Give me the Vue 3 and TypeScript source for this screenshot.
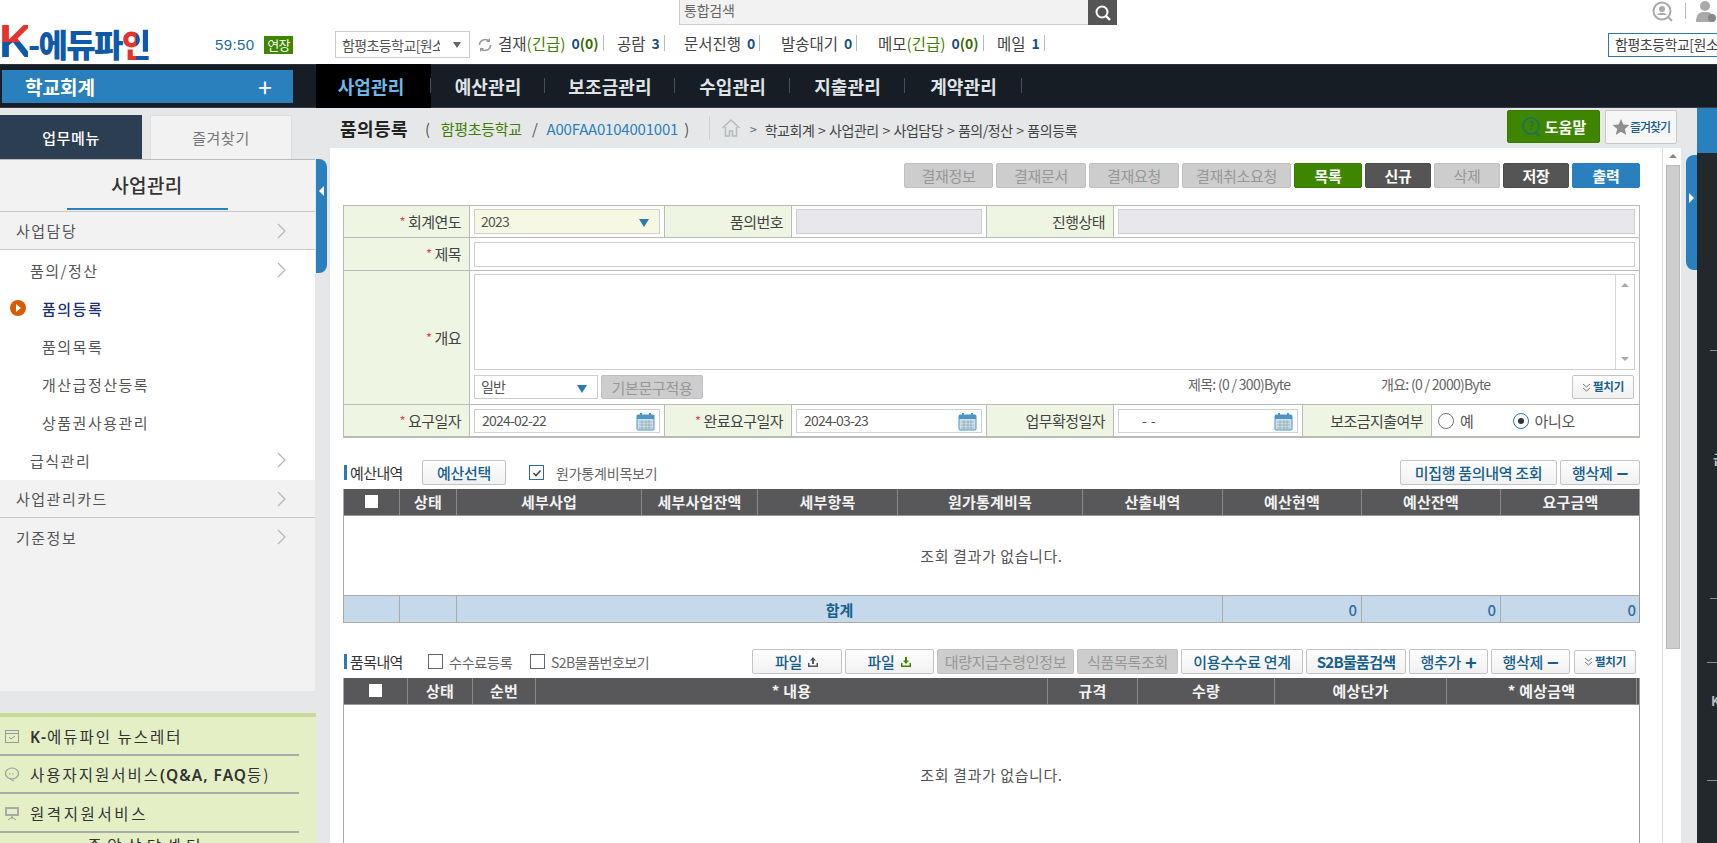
<script setup lang="ts">
const alerts = [
  { label: '결재', urgent: true, val: '0', sub: '0', w: 119 },
  { label: '공람', urgent: false, val: '3', w: 67 },
  { label: '문서진행', urgent: false, val: '0', w: 97 },
  { label: '발송대기', urgent: false, val: '0', w: 97 },
  { label: '메모', urgent: true, val: '0', sub: '0', w: 119 },
  { label: '메일', urgent: false, val: '1', w: 50 },
]
const navItems = [
  { t: '사업관리', w: 115, active: true },
  { t: '예산관리', w: 114 },
  { t: '보조금관리', w: 130 },
  { t: '수입관리', w: 115 },
  { t: '지출관리', w: 115 },
  { t: '계약관리', w: 117 },
]
const topButtons = [
  { t: '결재정보', w: 89, k: 'off' },
  { t: '결재문서', w: 90, k: 'off' },
  { t: '결재요청', w: 90, k: 'off' },
  { t: '결재취소요청', w: 109, k: 'off' },
  { t: '목록', w: 68, k: 'green' },
  { t: '신규', w: 66, k: 'dark' },
  { t: '삭제', w: 66, k: 'off' },
  { t: '저장', w: 66, k: 'dark' },
  { t: '출력', w: 68, k: 'blue' },
]
const budgetCols = [
  { t: '상태', w: 57 }, { t: '세부사업', w: 185 }, { t: '세부사업잔액', w: 116 }, { t: '세부항목', w: 140 },
  { t: '원가통계비목', w: 185 }, { t: '산출내역', w: 140 }, { t: '예산현액', w: 139 }, { t: '예산잔액', w: 139 }, { t: '요구금액', w: 139 },
]
const itemCols = [
  { t: '상태', w: 65 }, { t: '순번', w: 63 }, { t: '* 내용', w: 512 }, { t: '규격', w: 90 },
  { t: '수량', w: 137 }, { t: '예상단가', w: 172 }, { t: '* 예상금액', w: 190 },
]
const itemButtons = [
  { t: '대량지급수령인정보', w: 137, k: 'off' },
  { t: '식품목록조회', w: 101, k: 'off' },
  { t: '이용수수료 연계', w: 122, k: 'line' },
  { t: 'S2B물품검색', w: 100, k: 'line' },
]
const sideRows = [
  { t: '품의/정산', cls: 'sub', arrow: true },
  { t: '품의등록', cls: 'leaf cur', arrow: false },
  { t: '품의목록', cls: 'leaf', arrow: false },
  { t: '개산급정산등록', cls: 'leaf', arrow: false },
  { t: '상품권사용관리', cls: 'leaf', arrow: false },
  { t: '급식관리', cls: 'sub', arrow: true },
]
</script>

<template>
  <div class="page">
    <header class="top">
      <div class="top-row1">
        <div class="search">
          <span class="search-box">통합검색</span>
          <span class="search-btn">
            <svg width="18" height="18" viewBox="0 0 18 18"><circle cx="8" cy="8" r="5.500" fill="none" stroke="#fff" stroke-width="2" /><path d="M12 12l4 4" stroke="#fff" stroke-width="2.400" /></svg>
          </span>
        </div>
        <div class="top-icons">
          <svg width="24" height="24" viewBox="0 0 24 24"><circle cx="11" cy="11" r="8.500" fill="none" stroke="#aaa" stroke-width="2" /><circle cx="11" cy="9" r="3" fill="#aaa" /><path d="M6 15c2-3 8-3 10 0" fill="#aaa" /><path d="M17 17l4 4" stroke="#aaa" stroke-width="2" /></svg>
          <i class="top-sep"></i>
          <svg width="24" height="24" viewBox="0 0 24 24"><circle cx="10" cy="6" r="5" fill="#aaa" /><path d="M1 22c0-9 4-10 9-10s9 1 9 10z" fill="#aaa" /><circle cx="17" cy="18" r="4" fill="#888" /></svg>
        </div>
      </div>
      <div class="top-row2">
        <div class="logo"><b class="logo-k">K</b><b class="logo-t">-에듀파</b><b class="logo-in">인</b></div>
        <span class="timer">59:50</span>
        <span class="extend">연장</span>
        <div class="school-sel"><span class="school-txt">함평초등학교[원소</span><i class="mini-caret"></i></div>
        <svg class="refresh" width="16" height="16" viewBox="0 0 16 16"><path d="M2.500 8a5.500 5.500 0 0 1 9.600-3.600M13.500 8a5.500 5.500 0 0 1-9.600 3.600" fill="none" stroke="#999" stroke-width="1.600" /><path d="M13 1v4h-4zM3 15v-4h4z" fill="#999" /></svg>
        <div v-for="a in alerts" :key="a.label" class="alert" :style="{ width: a.w + 'px' }">
          <span class="alert-l">{{ a.label }}<em v-if="a.urgent">(긴급)</em></span>
          <b class="alert-v">{{ a.val }}<em v-if="a.sub">({{ a.sub }})</em></b>
          <i class="alert-sep"></i>
        </div>
        <div class="school-right">함평초등학교[원소</div>
      </div>
    </header>

    <nav class="nav">
      <div class="nav-home"><span>학교회계</span><span class="plus">+</span></div>
      <div class="nav-list">
        <a v-for="n in navItems" :key="n.t" class="nav-item" :class="{ on: n.active }" :style="{ width: n.w + 'px' }">{{ n.t }}</a>
      </div>
    </nav>

    <div class="body">
      <aside class="side">
        <div class="side-tabs">
          <div class="stab on">업무메뉴</div>
          <div class="stab">즐겨찾기</div>
        </div>
        <div class="menu">
          <div class="menu-title"><span>사업관리</span></div>
          <div class="mrow top-item bb">사업담당<svg class="chev" width="9" height="16" viewBox="0 0 9 16"><path d="M1 1l7 7-7 7" fill="none" stroke="#b5b5b5" stroke-width="1.200" /></svg></div>
          <div class="menu-white">
            <div v-for="r in sideRows" :key="r.t" class="mrow" :class="r.cls">
              <i v-if="r.cls.includes('cur')" class="bullet"></i>
              {{ r.t }}
              <svg v-if="r.arrow" class="chev" width="9" height="16" viewBox="0 0 9 16"><path d="M1 1l7 7-7 7" fill="none" stroke="#b5b5b5" stroke-width="1.200" /></svg>
            </div>
          </div>
          <div class="mrow top-item bb">사업관리카드<svg class="chev" width="9" height="16" viewBox="0 0 9 16"><path d="M1 1l7 7-7 7" fill="none" stroke="#b5b5b5" stroke-width="1.200" /></svg></div>
          <div class="mrow top-item">기준정보<svg class="chev" width="9" height="16" viewBox="0 0 9 16"><path d="M1 1l7 7-7 7" fill="none" stroke="#b5b5b5" stroke-width="1.200" /></svg></div>
        </div>
        <div class="links">
          <div class="link"><svg width="16" height="16" viewBox="0 0 16 16"><rect x="1.500" y="2.500" width="13" height="12" fill="none" stroke="#999" /><path d="M1.500 5.500h13" stroke="#999" /><path d="M5 9l2 2 4-3" fill="none" stroke="#999" /></svg><span><b>K-</b>에듀파인 뉴스레터</span></div>
          <div class="link"><svg width="16" height="16" viewBox="0 0 16 16"><ellipse cx="8" cy="7.500" rx="6.500" ry="5.500" fill="none" stroke="#999" stroke-width="1.200" /><path d="M5 8h6" stroke="#999" stroke-dasharray="1.500 1.500" /><path d="M6 13l4 2" stroke="#999" /></svg><span>사용자지원서비스<b>(Q&amp;A, FAQ</b>등)</span></div>
          <div class="link wide"><svg width="16" height="16" viewBox="0 0 16 16"><rect x="1" y="2" width="14" height="9" fill="#aaa" /><rect x="3" y="4" width="10" height="5" fill="#e4efc6" /><path d="M8 11v3M4 15l4-3 4 3" stroke="#999" fill="none" /></svg><span>원격지원서비스</span></div>
          <div class="link mid"><span>중 앙 상 담 센 터</span></div>
        </div>
      </aside>

      <div class="handle left"><i></i></div>

      <section class="center">
        <div class="sub-head">
          <h1>품의등록</h1>
          <span class="crumb-id">( <em class="g">함평초등학교</em> / <em class="b">A00FAA0104001001</em> )</span>
          <i class="crumb-sep"></i>
          <svg class="home" width="20" height="20" viewBox="0 0 20 20"><path d="M1.500 10L10 2l8.500 8M4.500 9v9h4v-5h3v5h4V9" fill="none" stroke="#b4bcbc" stroke-width="1.500" /></svg>
          <span class="crumb-gt">&gt;</span>
          <span class="crumb">학교회계 &gt; 사업관리 &gt; 사업담당 &gt; 품의/정산 &gt; 품의등록</span>
          <div class="help">
            <svg width="22" height="22" viewBox="0 0 22 22"><circle cx="10" cy="10" r="8" fill="none" stroke="#1f6f60" stroke-width="1.600" /><path d="M14 17l5 3" stroke="#1f6f60" stroke-width="1.600" /><text x="10" y="14" font-size="11" text-anchor="middle" fill="#1f6f60">?</text></svg>
            도움말
          </div>
          <div class="fav">
            <svg width="18" height="18" viewBox="0 0 18 18"><path d="M9 1l2.400 5.500 6 .5-4.600 4 1.400 6L9 13.800 3.800 17l1.400-6L.6 7l6-.5z" fill="#909090" /></svg>
            즐겨찾기
          </div>
        </div>

        <main class="main">
          <div class="content">
            <div class="toolbar right first">
              <button v-for="b in topButtons" :key="b.t" class="btn" :class="b.k" :style="{ width: b.w + 'px' }">{{ b.t }}</button>
            </div>

            <div class="form">
              <div class="frow r1">
                <div class="lab"><i>*</i> 회계연도</div>
                <div class="cell"><div class="box sel yellow">2023<i class="caret"></i></div></div>
                <div class="lab">품의번호</div>
                <div class="cell"><div class="box ro"></div></div>
                <div class="lab">진행상태</div>
                <div class="cell"><div class="box ro"></div></div>
              </div>
              <div class="frow r2">
                <div class="lab"><i>*</i> 제목</div>
                <div class="cell"><div class="box"></div></div>
              </div>
              <div class="frow r3">
                <div class="lab"><i>*</i> 개요</div>
                <div class="cell stack">
                  <div class="area">
                    <div class="area-bar"><i class="ar up"></i><i class="ar down"></i></div>
                  </div>
                  <div class="area-foot">
                    <div class="box sel small">일반<i class="caret"></i></div>
                    <button class="btn off apply">기본문구적용</button>
                    <span class="count c1">제목: (0 / 300)Byte</span>
                    <span class="count c2">개요: (0 / 2000)Byte</span>
                    <button class="btn line fold"><svg width="9" height="9" viewBox="0 0 9 9"><path d="M1 1l3.500 3L8 1M1 5l3.500 3L8 5" fill="none" stroke="#777" /></svg>펼치기</button>
                  </div>
                </div>
              </div>
              <div class="frow r4">
                <div class="lab"><i>*</i> 요구일자</div>
                <div class="cell"><div class="box date">2024-02-22<svg class="cal" width="19" height="19" viewBox="0 0 19 19"><rect x="1" y="3" width="17" height="15" rx="1" fill="#cfdfe8" stroke="#4b96c6" /><rect x="1" y="3" width="17" height="4" fill="#4b96c6" /><path d="M5 1v4M14 1v4" stroke="#4b96c6" stroke-width="2" /><path d="M3 10h13M3 13h13M3 16h13M6 8v9M10 8v9M13 8v9" stroke="#8fa8b5" stroke-width=".8" /></svg></div></div>
                <div class="lab"><i>*</i> 완료요구일자</div>
                <div class="cell"><div class="box date">2024-03-23<svg class="cal" width="19" height="19" viewBox="0 0 19 19"><rect x="1" y="3" width="17" height="15" rx="1" fill="#cfdfe8" stroke="#4b96c6" /><rect x="1" y="3" width="17" height="4" fill="#4b96c6" /><path d="M5 1v4M14 1v4" stroke="#4b96c6" stroke-width="2" /><path d="M3 10h13M3 13h13M3 16h13M6 8v9M10 8v9M13 8v9" stroke="#8fa8b5" stroke-width=".8" /></svg></div></div>
                <div class="lab">업무확정일자</div>
                <div class="cell"><div class="box date blank">- &nbsp;-<svg class="cal" width="19" height="19" viewBox="0 0 19 19"><rect x="1" y="3" width="17" height="15" rx="1" fill="#cfdfe8" stroke="#4b96c6" /><rect x="1" y="3" width="17" height="4" fill="#4b96c6" /><path d="M5 1v4M14 1v4" stroke="#4b96c6" stroke-width="2" /><path d="M3 10h13M3 13h13M3 16h13M6 8v9M10 8v9M13 8v9" stroke="#8fa8b5" stroke-width=".8" /></svg></div></div>
                <div class="lab">보조금지출여부</div>
                <div class="cell radios">
                  <span class="radio"><i class="dot"></i>예</span>
                  <span class="radio r2nd"><i class="dot on"></i>아니오</span>
                </div>
              </div>
            </div>

            <div class="toolbar sec1">
              <h2>예산내역</h2>
              <button class="btn line choose">예산선택</button>
              <span class="chk c-budget"><i class="ck on"><svg width="10" height="10" viewBox="0 0 10 10"><path d="M1.500 5l2.500 2.500 4.500-5" fill="none" stroke="#444" stroke-width="1.600" /></svg></i>원가통계비목보기</span>
              <button class="btn line push" style="width: 157px">미집행 품의내역 조회</button>
              <button class="btn line" style="width: 80px">행삭제 <b class="sign">−</b></button>
            </div>
            <div class="grid">
              <div class="ghead">
                <div class="gc ch" style="width: 56px"><i class="hck"></i></div>
                <div v-for="c in budgetCols" :key="c.t" class="gc" :style="{ width: c.w + 'px' }">{{ c.t }}</div>
              </div>
              <div class="gbody">조회 결과가 없습니다.</div>
              <div class="gfoot">
                <div class="fc" style="width: 56px"></div>
                <div class="fc" style="width: 57px"></div>
                <div class="fc total" style="width: 766px">합계</div>
                <div class="fc num" style="width: 139px">0</div>
                <div class="fc num" style="width: 139px">0</div>
                <div class="fc num" style="width: 139px">0</div>
              </div>
            </div>

            <div class="toolbar sec2">
              <h2>품목내역</h2>
              <span class="chk c-fee"><i class="ck"></i>수수료등록</span>
              <span class="chk c-s2b"><i class="ck"></i>S2B물품번호보기</span>
              <button class="btn line push2" style="width: 90px">파일 <svg class="fi" width="12" height="12" viewBox="0 0 12 12"><path d="M6 1L3 4.500h2V8h2V4.500h2zM1 7v4h10V7H9.500v2.500h-7V7z" fill="#555" /></svg></button>
              <button class="btn line" style="width: 89px">파일 <svg class="fi" width="12" height="12" viewBox="0 0 12 12"><path d="M6 8L3 4.500h2V1h2v3.500h2zM1 7v4h10V7H9.500v2.500h-7V7z" fill="#3f8600" /></svg></button>
              <button v-for="b in itemButtons" :key="b.t" class="btn" :class="[b.k, { bold: b.t.startsWith('S2B') }]" :style="{ width: b.w + 'px' }">{{ b.t }}</button>
              <button class="btn line" style="width: 79px">행추가 <b class="sign">+</b></button>
              <button class="btn line" style="width: 79px">행삭제 <b class="sign">−</b></button>
              <button class="btn line fold" style="margin-left: 1px"><svg width="9" height="9" viewBox="0 0 9 9"><path d="M1 1l3.500 3L8 1M1 5l3.500 3L8 5" fill="none" stroke="#777" /></svg>펼치기</button>
            </div>
            <div class="grid items">
              <div class="ghead">
                <div class="gc ch" style="width: 64px"><i class="hck"></i></div>
                <div v-for="c in itemCols" :key="c.t" class="gc" :style="{ width: c.w + 'px' }">{{ c.t }}</div>
              </div>
              <div class="gbody tall">조회 결과가 없습니다.</div>
            </div>
          </div>
          <div class="scroll">
            <i class="ar up"></i>
            <div class="thumb"></div>
          </div>
        </main>
      </section>

      <div class="handle right"><i></i></div>

      <aside class="rail">
        <div class="rail-top"></div>
        <div class="rail-body">
          <i class="rl l1"></i>
          <span class="rt t1">급</span>
          <i class="rl l2"></i>
          <i class="rl l3"></i>
          <span class="rt t2">K</span>
          <i class="rl l4"></i>
        </div>
      </aside>
    </div>
  </div>
</template>

<style>
html, body { margin: 0; padding: 0; background: #fff; overflow: hidden; }
</style>

<style scoped>
* { box-sizing: border-box; }
em, i { font-style: normal; }
.page {
  width: 1717px; height: 843px; overflow: hidden; display: flex; flex-direction: column;
  font-family: "Noto Sans CJK KR", "Noto Sans", sans-serif; color: #444; background: #fff;
}
.top { height: 64px; flex: none; }
.top-row1 { height: 25px; display: flex; padding-left: 679px; }
.search { display: flex; width: 438px; height: 25px; flex: none; }
.search-box { width: 409px; background: #f2f2f2; border-bottom: 1px solid #ccc; border-left: 1px solid #ccc; color: #666; font-size: 14px; line-height: 20px; padding-left: 4px; letter-spacing: -.2px; }
.search-btn { width: 29px; background: #555; display: flex; align-items: center; justify-content: center; }
.top-icons { margin-left: 534px; display: flex; align-items: flex-start; flex: none; }
.top-icons svg { flex: none; }
.top-sep { width: 1px; height: 16px; background: #bbb; margin: 3px 9px 0 10px; flex: none; }
.top-row2 { height: 39px; display: flex; align-items: center; position: relative; }
.logo { width: 215px; height: 36px; margin-top: -5px; line-height: 36px; white-space: nowrap; font-size: 32px; letter-spacing: -1.700px; flex: none; }
.logo-k { font-size: 47px; font-weight: 900; letter-spacing: -5px; line-height: 34px; background: linear-gradient(#e5342c 0 52%, #0f5aa8 52%); -webkit-background-clip: text; background-clip: text; color: transparent; font-family: "Liberation Sans", sans-serif; margin-left: -1px; }
.logo-t { color: #0f5aa8; font-weight: 900; }
.logo-in { font-weight: 900; background: linear-gradient(90deg, #e5342c 0 52%, #0f5aa8 52%); -webkit-background-clip: text; background-clip: text; color: transparent; }
.timer { width: 49px; color: #1e6a9e; font-size: 15px; letter-spacing: .4px; font-family: "Liberation Sans", sans-serif; }
.extend { width: 29px; height: 18px; background: #3f8600; color: #fff; font-size: 13px; line-height: 18px; text-align: center; letter-spacing: -.8px; }
.school-sel { width: 135px; height: 27px; margin-left: 42px; border: 1px solid #ccc; display: flex; align-items: center; padding-left: 6px; overflow: hidden; flex: none; }
.school-txt { width: 98px; flex: none; overflow: hidden; white-space: nowrap; font-size: 14px; letter-spacing: -.6px; color: #555; }
.mini-caret { margin-left: 13px; border: 4px solid transparent; border-top: 6px solid #666; border-bottom: 0; }
.refresh { margin: 0 5px 0 7px; flex: none; }
.alert { display: flex; align-items: center; font-size: 15.500px; white-space: nowrap; letter-spacing: 0; color: #444; flex: none; padding-bottom: 3px; }
.alert-l em { color: #3f7f00; }
.alert-v { color: #1b4f85; margin-left: 6px; font-weight: 700; font-size: 14px; letter-spacing: 0; }
.alert-v em { color: #3b6b00; }
.alert-sep { width: 1px; height: 16px; background: #bbb; margin-left: 4px; }
.school-right { position: absolute; left: 1608px; top: 8px; width: 120px; height: 24px; border: 1px solid #2a7ab0; font-size: 14px; line-height: 21px; padding-left: 6px; color: #444; white-space: nowrap; letter-spacing: -.5px; }

.nav { height: 44px; flex: none; background: #161d25; display: flex; padding-left: 2px; border-top: 1px solid #2a333c; border-bottom: 1px solid #333c44; }
.nav-home { width: 291px; height: 33px; margin-top: 5px; background: #2a80bd; color: #fff; font-weight: 700; font-size: 19px; display: flex; justify-content: space-between; align-items: center; padding: 0 21px 0 23px; }
.plus { font-size: 25px; font-weight: 400; line-height: 25px; }
.nav-list { display: flex; margin-left: 23px; margin-top: -1px; height: 44px; }
.nav-item { display: flex; align-items: center; justify-content: center; color: #dfe3e6; font-size: 18px; font-weight: 700; letter-spacing: .1px; position: relative; }
.nav-item::after { content: ""; position: absolute; right: 0; top: 14px; height: 15px; width: 1px; background: #47505a; }
.nav-item.on { background: #000; color: #6fb9ea; padding-right: 5px; }

.body { flex: 1; display: flex; min-height: 0; position: relative; background: #e5e7e9; }
.side { width: 316px; flex: none; display: flex; flex-direction: column; }
.side-tabs { height: 51px; padding-top: 7px; display: flex; gap: 8px; width: 292px; flex: none; }
.stab { width: 142px; height: 44px; background: #f2f2f2; border: 1px solid #ddd; border-bottom: 0; color: #777; font-size: 15px; display: flex; align-items: center; justify-content: center; letter-spacing: .6px; }
.stab.on { background: #2c3e52; border-color: #2c3e52; color: #fff; font-weight: 500; }
.menu { height: 532px; width: 315px; background: #f2f2f2; border-top: 1px solid #bbb; flex: none; }
.menu-title { height: 52px; border-bottom: 1px solid #c8c8c8; display: flex; justify-content: center; position: relative; }
.menu-title span { width: 161px; margin-left: -21px; text-align: center; font-size: 19px; font-weight: 500; color: #333; line-height: 50px; border-bottom: 2px solid #2a80bd; height: 50px; letter-spacing: .4px; }
.mrow { height: 38px; display: flex; align-items: center; position: relative; font-size: 15px; color: #555; letter-spacing: 1.500px; }
.top-item { padding-left: 16px; }
.bb { border-bottom: 1px solid #c8c8c8; height: 38px; }
.chev { position: absolute; left: 277px; top: 11px; }
.menu-white { background: #fff; height: 230px; padding-top: 1px; }
.sub { padding-left: 30px; }
.leaf { padding-left: 42px; }
.cur { color: #1a2f78; font-weight: 500; }
.bullet { position: absolute; left: 10px; top: 11px; width: 16px; height: 16px; border-radius: 50%; background: #d95a00; }
.bullet::after { content: ""; position: absolute; left: 6px; top: 4px; border: 4px solid transparent; border-left: 5px solid #fff; border-right: 0; }
.links { margin-top: 22px; background: #e4efc6; border-top: 4px solid #c9da97; height: 140px; padding-top: 1px; flex: none; }
.link { height: 38px; width: 299px; border-bottom: 2px solid #aaa; display: flex; align-items: center; padding-left: 4px; gap: 10px; font-size: 15.500px; color: #333; letter-spacing: 2px; white-space: nowrap; }
.link:nth-child(3) { height: 39px; }
.link b { font-weight: 600; font-family: "Noto Sans", sans-serif; letter-spacing: 1px; }
.link.wide span { letter-spacing: 2.600px; }
.link.mid { justify-content: center; align-items: flex-start; border: 0; height: 26px; padding: 1px 10px 0 0; letter-spacing: 1px; }

.handle { position: absolute; width: 11px; background: #2a80bd; z-index: 2; display: flex; align-items: center; justify-content: center; }
.handle.left { left: 316px; top: 51px; height: 114px; border-radius: 0 8px 8px 0; }
.handle.left i { border: 5px solid transparent; border-right: 5px solid #fff; border-left: 0; margin-top: -50px; }
.handle.right { left: 1686px; top: 47px; height: 115px; border-radius: 8px 0 0 8px; }
.handle.right i { border: 5px solid transparent; border-left: 5px solid #fff; border-right: 0; margin-top: -30px; }

.center { width: 1381px; flex: none; display: flex; flex-direction: column; min-height: 0; }
.sub-head { height: 40px; display: flex; align-items: center; padding-left: 24px; flex: none; }
.sub-head h1 { margin: 0; font-size: 18px; color: #222; font-weight: 700; letter-spacing: .4px; width: 85px; flex: none; white-space: nowrap; }
.crumb-id { font-size: 15px; color: #555; width: 284px; white-space: nowrap; letter-spacing: -.3px; flex: none; }
.g { color: #3f7f00; margin: 0 7px 0 8px; }
.b { color: #2a80bd; letter-spacing: -.2px; margin: 0 3px 0 6px; }
.crumb-sep { width: 1px; height: 24px; background: #d0d3d4; margin-right: 11px; flex: none; }
.home { flex: none; }
.crumb-gt { margin: 0 8px 0 9px; color: #666; font-size: 12px; }
.crumb { font-size: 14px; color: #444; letter-spacing: -.45px; word-spacing: 1px; white-space: nowrap; padding-top: 3px; }
.help { margin-left: auto; width: 93px; height: 33px; margin-top: -3px; background: #3f8600; border: 1px solid #3a7a00; border-radius: 2px; color: #fff; font-size: 15px; font-weight: 700; display: flex; align-items: center; justify-content: center; gap: 2px; flex: none; }
.fav { width: 72px; height: 34px; margin: -3px 20px 0 5px; background: #f6f6f6; border: 1px solid #c8c8c8; border-radius: 2px; color: #16608f; font-size: 12px; font-weight: 500; display: flex; align-items: center; justify-content: center; letter-spacing: -1px; white-space: nowrap; flex: none; }

.main { margin-left: 14px; width: 1351px; flex: 1; min-height: 0; background: #fff; display: flex; overflow: hidden; }
.content { width: 1332px; padding-left: 13px; flex: none; }
.toolbar { display: flex; align-items: center; height: 25px; }
.toolbar.right { justify-content: flex-end; gap: 3px; width: 1297px; }
.toolbar.first { margin-top: 15px; }
.btn { height: 25px; border: 1px solid #bbb; border-radius: 2px; font-family: inherit; font-size: 15px; line-height: 1; padding: 0; letter-spacing: -.3px; flex: none; display: inline-flex; align-items: center; justify-content: center; white-space: nowrap; }
.off { background: #cdcdcd; color: #979797; border-color: #c0c0c0; }
.green { background: #3f8600; color: #fff; border-color: #3a7a00; font-weight: 700; }
.dark { background: #555; color: #fff; border-color: #4a4a4a; font-weight: 700; }
.blue { background: #2a80bd; color: #fff; border-color: #2a80bd; font-weight: 700; }
.line { background: linear-gradient(#fff, #f0f0f0); color: #16608f; border-color: #c4c4c4; font-weight: 500; }
.bold { font-weight: 700; letter-spacing: -.7px; }
.form { margin-top: 17px; width: 1297px; border: 1px solid #b8bcb4; border-bottom-width: 2px; }
.frow { display: grid; border-bottom: 1px solid #b8bcb4; }
.frow:last-child { border-bottom: 0; }
.r1 { height: 32px; grid-template-columns: 126px 195px 127px 195px 127px 1fr; }
.r2 { height: 33px; grid-template-columns: 126px 1fr; }
.r3 { height: 134px; grid-template-columns: 126px 1fr; }
.r4 { height: 31px; grid-template-columns: 126px 195px 127px 195px 127px 189px 129px 1fr; }
.lab { background: #eff5e3; display: flex; align-items: center; justify-content: flex-end; padding: 0 8px 1px 0; font-size: 15px; color: #444; letter-spacing: -.55px; gap: 3px; border-right: 1px solid #b8bcb4; white-space: nowrap; }
.lab i { color: #e2465c; font-size: 13px; }
.cell { display: flex; align-items: center; padding: 0 4px; border-right: 1px solid #b8bcb4; min-width: 0; }
.cell:last-child { border-right: 0; }
.box { height: 25px; width: 100%; border: 1px solid #cfcfcf; background: #fff; font-size: 14px; color: #555; display: flex; align-items: center; padding: 0 0 2px 6px; letter-spacing: -.8px; position: relative; }
.ro { background: #e8e8ec; }
.yellow { background: #f6f8e4; }
.caret { position: absolute; right: 10px; top: 9px; border: 5.500px solid transparent; border-top: 8px solid #2a7ab5; border-bottom: 0; }
.stack { flex-direction: column; align-items: stretch; justify-content: flex-start; padding-top: 3px; }
.area { height: 96px; border: 1px solid #cfcfcf; position: relative; }
.area-bar { position: absolute; right: 0; top: 0; bottom: 0; width: 19px; border-left: 1px solid #d8d8d8; }
.ar { position: absolute; left: 5px; border: 4px solid transparent; }
.ar.up { top: 8px; border-bottom: 4px solid #aaa; border-top: 0; }
.ar.down { bottom: 8px; border-top: 4px solid #aaa; border-bottom: 0; }
.area-foot { display: flex; align-items: center; margin-top: 5px; height: 24px; position: relative; }
.small { width: 124px; height: 24px; }
.apply { width: 102px; height: 24px; margin-left: 3px; }
.count { font-size: 14px; color: #666; letter-spacing: -.7px; white-space: nowrap; margin-bottom: 6px; flex: none; }
.c1 { margin-left: 485px; width: 193px; }
.c2 { width: 191px; }
.fold { width: 62px; height: 24px; font-size: 11.500px; font-weight: 700; letter-spacing: -.2px; gap: 2px; }
.date { padding-left: 7px; height: 24px; }
.blank { padding-left: 23px; }
.cal { position: absolute; right: 4px; top: 2px; }
.radios { font-size: 15px; color: #555; letter-spacing: -.3px; padding-left: 6px; }
.radio { display: inline-flex; align-items: center; gap: 6px; }
.r2nd { margin-left: 39px; }
.dot { width: 16px; height: 16px; border: 1px solid #777; border-radius: 50%; display: flex; align-items: center; justify-content: center; }
.dot.on { border-color: #2a7ab5; }
.dot.on::after { content: ""; width: 6px; height: 6px; background: #333; border-radius: 50%; }
.sec1 { margin-top: 22px; width: 1297px; }
.sec2 { margin-top: 26px; width: 1297px; }
h2 { margin: 0 0 1px 1px; font-size: 15px; font-weight: 400; color: #333; letter-spacing: -.6px; border-left: 3px solid #2a7ab5; padding-left: 3px; line-height: 15px; white-space: nowrap; width: 78px; flex: none; }
.choose { width: 84px; }
.chk { display: inline-flex; align-items: center; gap: 6px; font-size: 14px; color: #666; letter-spacing: -.2px; white-space: nowrap; flex: none; }
.ck { width: 15px; height: 15px; border: 1px solid #666; background: #fff; display: flex; align-items: center; justify-content: center; flex: none; }
.ck.on { border-color: #2a6a9e; }
.c-budget { margin-left: 23px; gap: 12px; }
.push { margin-left: auto; margin-right: 3px; }
.c-fee { margin-left: 6px; width: 102px; }
.c-s2b { width: 212px; letter-spacing: -.5px; }
.sec2 .btn { margin-right: 3px; }
.sec2 .btn:last-child { margin-right: 0; }
.push2 { margin-left: 10px; }
.fi { margin-left: 5px; }
.sign { font-size: 20px; font-weight: 700; line-height: 1; margin-left: 4px; }
.grid { margin-top: 4px; width: 1297px; border-left: 1px solid #aaa; border-right: 1px solid #999; border-bottom: 1px solid #aaa; }
.ghead { height: 27px; background: #58585a; display: flex; border-bottom: 1px solid #999; }
.gc { height: 100%; border-right: 1px solid #8a8a8a; color: #f2f2f2; font-size: 15px; font-weight: 700; display: flex; align-items: center; justify-content: center; letter-spacing: .2px; flex: none; white-space: nowrap; padding-bottom: 1px; }
.gc:last-child { border-right: 0; }
.items .gc:last-child { border-right: 1px solid #8a8a8a; }
.hck { width: 13px; height: 13px; background: #fff; display: block; }
.gbody { height: 80px; display: flex; align-items: center; justify-content: center; font-size: 15px; color: #555; letter-spacing: .6px; border-bottom: 1px solid #aaa; }
.gbody.tall { height: 138px; border-bottom: 0; }
.items { border-bottom: 0; height: 300px; }
.gfoot { height: 26px; background: #c5d9ea; display: flex; }
.fc { height: 100%; border-right: 1px solid #aaa; font-size: 15px; display: flex; align-items: center; justify-content: center; color: #16608f; flex: none; }
.fc:last-child { border-right: 0; }
.total { font-weight: 700; }
.num { justify-content: flex-end; padding-right: 4px; color: #2f6e9e; font-weight: 500; }
.scroll { flex: none; width: 19px; border-left: 1px solid #ddd; position: relative; }
.scroll .ar.up { left: 6px; top: 6px; border-bottom-color: #888; }
.thumb { position: absolute; left: 3px; top: 17px; width: 14px; height: 484px; background: #cdcdcd; border: 1px solid #bbb; }

.rail { width: 20px; flex: none; display: flex; flex-direction: column; }
.rail-top { height: 45px; background: #2a80bd; flex: none; }
.rail-body { flex: 1; background: #22282c; position: relative; }
.rl { position: absolute; height: 1px; background: #8a8e90; right: 0; }
.l1 { top: 197px; width: 7px; }
.l2 { top: 445px; width: 7px; }
.l3 { top: 509px; width: 10px; }
.l4 { top: 627px; width: 10px; }
.rt { position: absolute; color: #bbb; font-size: 13px; font-weight: 700; }
.t1 { left: 16px; top: 296px; }
.t2 { left: 14px; top: 538px; }
</style>
